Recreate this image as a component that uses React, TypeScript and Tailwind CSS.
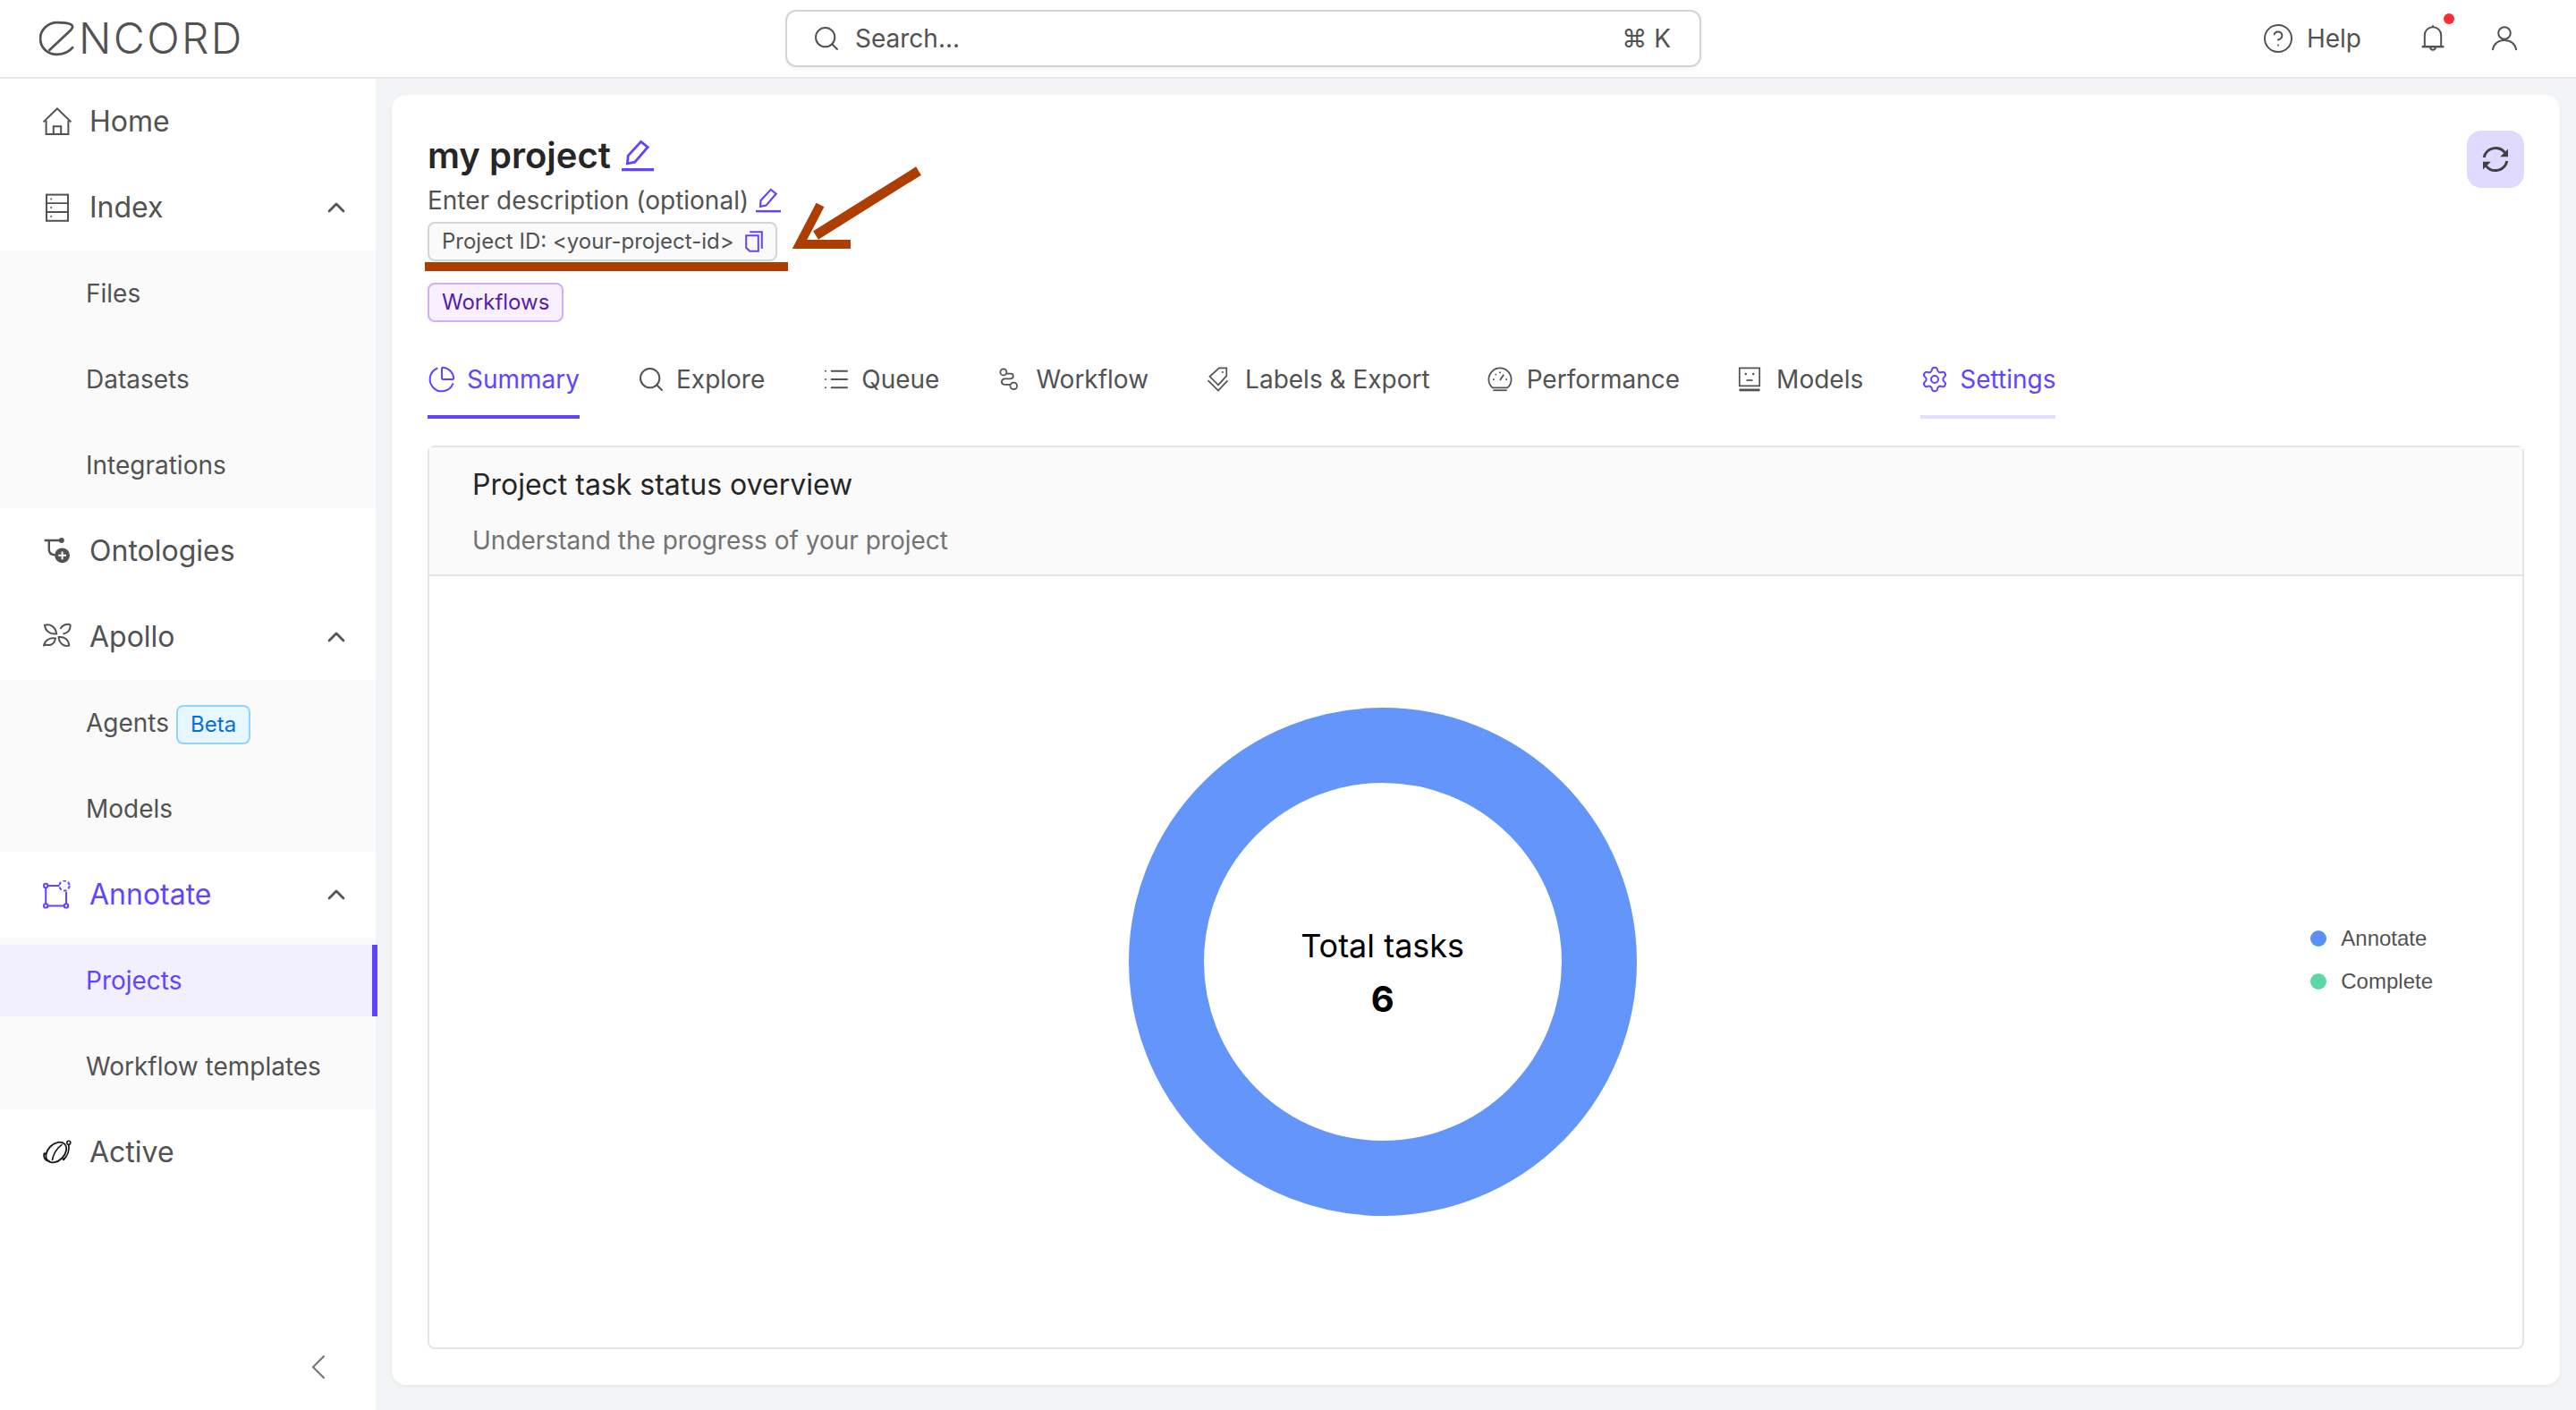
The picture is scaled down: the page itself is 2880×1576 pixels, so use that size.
import { ChevronUp, ChevronLeft, Search, List, CircleHelp, ChartPie, Settings } from "lucide-react";
import type { ReactNode } from "react";

const Ico = ({ children, className = "w-4 h-4" }: { children: ReactNode; className?: string }) => (
  <svg viewBox="0 0 16 16" fill="none" stroke="currentColor" strokeWidth="1" className={`${className} shrink-0`}>
    {children}
  </svg>
);

const tabIcon = "w-3.5 h-3.5 mr-0.5";

const HomeIcon = () => (
  <Ico>
    <path d="M0.3 8.2 8 0.7l7.7 7.5" />
    <path d="M1.8 7.4V15h12.4V7.4" />
    <path d="M5.9 15v-4.4h4.2V15" />
  </Ico>
);
const IndexIcon = () => (
  <Ico>
    <rect x="2" y="0.8" width="12" height="14.6" />
    <path d="M2 5.6h12M2 10.5h12" strokeWidth="0.9" />
    <circle cx="4.6" cy="3.3" r="0.5" fill="currentColor" stroke="none" />
    <circle cx="4.6" cy="8" r="0.5" fill="currentColor" stroke="none" />
    <circle cx="4.6" cy="13" r="0.5" fill="currentColor" stroke="none" />
  </Ico>
);
const OntologyIcon = () => (
  <Ico>
    <path d="M0.8 2h9.4M3.4 2v5.2c0 1.6 1 2.8 3.6 3" strokeWidth="1.2" />
    <circle cx="10.4" cy="2" r="1.5" fill="currentColor" stroke="none" />
    <circle cx="10.8" cy="10.4" r="4.2" fill="currentColor" stroke="none" />
    <path d="M10.8 8.2v4.4M8.6 10.4H13" stroke="white" strokeWidth="1" />
  </Ico>
);
const ApolloIcon = () => (
  <Ico>
    <path d="M1 1.4c3-1 6 .8 6.6 4.8C4.2 6.6 1.4 4.8 1 1.4z" />
    <path d="M8.8 8c3.2-.4 5.6 1.6 5.8 4.8-3 .8-5.6-1.4-5.8-4.8z" />
    <path d="M15.2 1c.6 3-1.6 5-4 5.2M15.2 1c-2-.4-4.6.2-5.4 2.4" />
    <path d="M.6 12.6c.4-2.6 3-4.4 6.4-3.8-.4 2.8-2.6 4.2-4.6 3.6-.6-.2-1.2 0-1.8.2z" />
  </Ico>
);
const AnnotateIcon = () => (
  <Ico>
    <circle cx="1.6" cy="3" r="1.1" />
    <path d="M2.8 3h6.4M1.6 4.2V13M2.8 14.2h9M13 6.4V13" />
    <circle cx="12" cy="3" r="2.8" strokeDasharray="1.8 1.2" />
    <circle cx="1.6" cy="14.2" r="1.1" />
    <circle cx="13" cy="14.2" r="1.1" />
  </Ico>
);
const ActiveIcon = () => (
  <Ico className="w-4 h-4 text-neutral-900">
    <ellipse cx="7.4" cy="8" rx="4.6" ry="6.6" transform="rotate(45 7.4 8)" strokeWidth="0.9" />
    <path d="M10.8 3.6C8 5.4 5.6 9 5.2 12.6" strokeWidth="0.8" />
    <path d="M.8 8.6c-.8 2.4.8 4.4 3 4.2M14.4 4c.4 3-.8 6.4-3.2 8.4" strokeWidth="0.9" />
    <circle cx="14.4" cy="2.6" r="1" strokeWidth="0.8" />
    <circle cx="1" cy="8.8" r="0.7" fill="currentColor" stroke="none" />
    <circle cx="11.6" cy="11.8" r="0.7" fill="currentColor" stroke="none" />
  </Ico>
);

const PencilIcon = ({ className }: { className: string }) => (
  <svg viewBox="0 0 18 18" fill="none" stroke="#5f45ff" strokeWidth="1.4" className={`${className} shrink-0`}>
    <path d="M3.2 13.4 3.6 9 10.8 1.2l3.8 3-7.2 8.4z" />
    <path d="M0 16.8h18" strokeWidth="1.6" />
  </svg>
);

const CopyIcon = () => (
  <svg viewBox="0 0 10 12" fill="none" stroke="#5f45ff" strokeWidth="1" className="w-2.5 h-3 shrink-0">
    <path d="M2.6.6h6.8v9.4" />
    <path d="M.6 2.6h6.8v8.8H2.6L.6 9.4z" />
  </svg>
);

const WorkflowTabIcon = () => (
  <Ico className={tabIcon}>
    <circle cx="4.5" cy="3.4" r="2" />
    <circle cx="11" cy="12.2" r="2.2" />
    <path d="M6.4 4.4h2.8c2 .2 2.2 3-.2 3.2H5.4c-2.6.2-2.8 3.4-.2 3.8h3.6" />
  </Ico>
);
const LabelsIcon = () => (
  <Ico className={tabIcon}>
    <path d="M8.5.8h4.8v5L8 11.6 2.6 6.2z" />
    <path d="M1.4 8.6 8 15.2l6-6.4" />
    <circle cx="10.8" cy="3.4" r="0.6" fill="currentColor" stroke="none" />
  </Ico>
);
const GaugeIcon = () => (
  <Ico className={tabIcon}>
    <path d="M3.2 13.4A7.2 7.2 0 1 1 12.8 13.4z" />
    <path d="M8 8.6 10.4 5" />
    <path d="M3.4 8h1M11.6 8h1M5 4.6l.6.6M8 3.2v1" />
    <path d="M3.6 15h8.8" />
  </Ico>
);
const ModelsIcon = () => (
  <Ico className={tabIcon}>
    <rect x="1.6" y="0.8" width="12.8" height="11.4" />
    <path d="M1.4 14.8h13.2" strokeWidth="1.6" />
    <circle cx="5.6" cy="4.6" r="0.7" fill="currentColor" stroke="none" />
    <circle cx="10.4" cy="4.6" r="0.7" fill="currentColor" stroke="none" />
    <path d="M6 8.6h4" />
  </Ico>
);

const RefreshIcon = () => (
  <svg viewBox="0 0 16 16" fill="none" stroke="currentColor" strokeWidth="1.5" className="w-4 h-4 text-neutral-700">
    <path d="M1.6 7A6.6 6.6 0 0 1 13.2 4.2" />
    <path d="M14.4 9A6.6 6.6 0 0 1 2.8 11.8" />
    <path d="M15 2.2v4.4h-4.4z" fill="currentColor" stroke="none" />
    <path d="M1 13.8V9.4h4.4z" fill="currentColor" stroke="none" />
  </svg>
);
const BellIcon = () => (
  <Ico>
    <path d="M3.4 12.4V6.2a4.6 4.6 0 0 1 9.2 0v6.2" />
    <path d="M1.8 12.6h12.4" strokeWidth="1.2" />
    <path d="M8 .6v1" />
    <path d="M6.6 13c0 1.8 2.8 1.8 2.8 0" />
  </Ico>
);
const UserIcon = () => (
  <Ico>
    <circle cx="8" cy="5" r="3.4" />
    <path d="M1.4 14.6c.4-3.4 3-5.6 6.6-5.6s6.2 2.2 6.6 5.6" />
  </Ico>
);

const Logo = () => (
  <div className="flex items-center gap-0.5 text-neutral-600">
    <svg viewBox="0 0 38 36" fill="none" stroke="currentColor" strokeWidth="2.6" className="w-5 h-5 shrink-0">
      <path d="M10 31 33 9.4c3-3 3-5 .4-6.4C29 1 24 1 19 1 9 1 1 9 1 18c0 10 8 17 18 17 7 0 12-2 17-8" />
    </svg>
    <span className="text-2xl font-light leading-none tracking-wider">NCORD</span>
  </div>
);

const NavRow = ({ icon, label, open, active }: { icon: ReactNode; label: string; open?: boolean; active?: boolean }) => (
  <div className={`h-12 flex items-center gap-2.5 pl-6 pr-3.5 text-base ${active ? "text-[#5f45ff]" : "text-neutral-600"}`}>
    {icon}
    <span className="flex-1">{label}</span>
    {open && <ChevronUp className="w-4 h-4 text-neutral-600" />}
  </div>
);

const SubRow = ({ children }: { children: ReactNode }) => (
  <div className="h-12 flex items-center gap-1 pl-12 text-sm text-neutral-600">{children}</div>
);

const Tab = ({ icon, label, state }: { icon: ReactNode; label: string; state?: "active" | "soft" }) => (
  <div
    className={`flex items-center gap-1.5 pb-2.5 border-b-2 text-sm ${
      state === "active"
        ? "text-[#5f45ff] border-[#5f45ff]"
        : state === "soft"
          ? "text-[#5f45ff] border-[#e2deff]"
          : "text-neutral-600 border-transparent"
    }`}
  >
    {icon}
    <span>{label}</span>
  </div>
);

export default function App() {
  return (
    <div className="relative [zoom:2] w-[1440px] h-[788px] overflow-hidden flex flex-col bg-gray-100 font-[Inter]">
      <header className="h-11 shrink-0 flex items-center bg-white border-b border-gray-200">
        <div className="w-[439px] pl-5.5">
          <Logo />
        </div>
        <div className="w-lg h-8 flex items-center gap-2 pl-3.5 pr-4 rounded-md border border-neutral-300 text-sm text-neutral-600 shadow-xs">
          <Search className="w-4 h-4" strokeWidth={1.5} />
          <span className="flex-1">Search...</span>
          <span>⌘ K</span>
        </div>
        <div className="flex-1 flex items-center justify-end pr-8 text-neutral-600">
          <div className="flex items-center gap-1.75 text-sm">
            <CircleHelp className="w-[18px] h-[18px]" strokeWidth={1.3} />
            <span>Help</span>
          </div>
          <div className="relative ml-8">
            <BellIcon />
            <span className="absolute -top-1.5 right-[-4px] w-1.5 h-1.5 rounded-full bg-red-500" />
          </div>
          <div className="ml-6">
            <UserIcon />
          </div>
        </div>
      </header>

      <div className="flex-1 flex min-h-0">
        <aside className="w-[210px] shrink-0 bg-white flex flex-col">
          <NavRow icon={<HomeIcon />} label="Home" />
          <NavRow icon={<IndexIcon />} label="Index" open />
          <div className="bg-neutral-50">
            <SubRow>Files</SubRow>
            <SubRow>Datasets</SubRow>
            <SubRow>Integrations</SubRow>
          </div>
          <NavRow icon={<OntologyIcon />} label="Ontologies" />
          <NavRow icon={<ApolloIcon />} label="Apollo" open />
          <div className="bg-neutral-50">
            <SubRow>
              Agents
              <span className="h-5.5 mt-0.5 px-1.75 flex items-center rounded border border-[#91d5ff] bg-[#e6f7ff] text-xs text-[#096dd9]">
                Beta
              </span>
            </SubRow>
            <SubRow>Models</SubRow>
          </div>
          <NavRow icon={<AnnotateIcon />} label="Annotate" open active />
          <div className="bg-neutral-50">
            <div className="py-1">
              <div className="w-[211px] h-10 flex items-center pl-12 text-sm text-[#5f45ff] bg-[#f2f0ff] border-r-3 border-[#5f45ff]">
                Projects
              </div>
            </div>
            <SubRow>Workflow templates</SubRow>
          </div>
          <NavRow icon={<ActiveIcon />} label="Active" />
          <div className="mt-auto flex justify-end pr-5 pb-3">
            <ChevronLeft className="w-6 h-6 text-neutral-500" strokeWidth={1} />
          </div>
        </aside>

        <main className="flex-1 min-w-0 flex px-2.25 pt-2.25 pb-3.5">
          <section className="flex-1 min-w-0 flex flex-col p-5 bg-white rounded-lg shadow-xs">
            <div className="flex justify-between items-start">
              <div className="flex flex-col items-start">
                <div className="flex items-center gap-1.5 h-7">
                  <h1 className="text-xl font-semibold text-neutral-800">my project</h1>
                  <PencilIcon className="w-4.5 h-4.5" />
                </div>
                <div className="flex items-center gap-1 h-5 mt-px text-sm text-neutral-600">
                  <span>Enter description (optional)</span>
                  <PencilIcon className="w-3.5 h-3.5" />
                </div>
                <div className="h-5.5 mt-0.5 px-1.75 flex items-center gap-1.5 rounded border border-neutral-300 bg-neutral-50 text-xs text-neutral-600">
                  <span>Project ID: &lt;your-project-id&gt;</span>
                  <CopyIcon />
                </div>
                <div className="h-5.5 mt-3 px-1.75 flex items-center rounded border border-[#d3adf7] bg-[#f9f0ff] text-xs text-[#531dab]">
                  Workflows
                </div>
              </div>
              <button className="w-8 h-8 flex items-center justify-center rounded-lg bg-[#dfdafe]">
                <RefreshIcon />
              </button>
            </div>

            <nav className="flex items-center gap-8 mt-5.5">
              <Tab icon={<ChartPie className="w-4 h-4" strokeWidth={1.5} />} label="Summary" state="active" />
              <Tab icon={<Search className="w-4 h-4" strokeWidth={1.5} />} label="Explore" />
              <Tab icon={<List className="w-4 h-4" strokeWidth={1.5} />} label="Queue" />
              <Tab icon={<WorkflowTabIcon />} label="Workflow" />
              <Tab icon={<LabelsIcon />} label="Labels & Export" />
              <Tab icon={<GaugeIcon />} label="Performance" />
              <Tab icon={<ModelsIcon />} label="Models" />
              <Tab icon={<Settings className="w-4 h-4" strokeWidth={1.5} />} label="Settings" state="soft" />
            </nav>

            <div className="flex-1 min-h-0 mt-3.75 flex flex-col rounded-sm border border-neutral-200">
              <div className="flex flex-col gap-2.25 px-6 pt-2.25 pb-2.25 bg-neutral-50 border-b border-neutral-200">
                <h2 className="text-base text-neutral-800">Project task status overview</h2>
                <p className="text-sm text-neutral-500">Understand the progress of your project</p>
              </div>
              <div className="flex-1 min-h-0 flex items-center">
                <div className="flex-1 flex justify-center pl-3.5">
                  <div className="relative w-72 h-72">
                    <svg viewBox="0 0 288 288" className="w-full h-full">
                      <circle cx="144" cy="144" r="121" fill="none" stroke="#6495fb" strokeWidth="42" />
                    </svg>
                    <div className="absolute inset-0 flex flex-col items-center justify-center gap-0.5 pt-3 text-black">
                      <span className="text-lg">Total tasks</span>
                      <span className="text-xl font-bold">6</span>
                    </div>
                  </div>
                </div>
                <div className="flex flex-col gap-2 mr-12.5 mb-0.5 font-['Liberation_Sans'] text-xs text-neutral-600">
                  <div className="flex items-center gap-2">
                    <span className="w-2.25 h-2.25 rounded-full bg-[#5b8ff9]" />
                    Annotate
                  </div>
                  <div className="flex items-center gap-2">
                    <span className="w-2.25 h-2.25 rounded-full bg-[#5ad8a6]" />
                    Complete
                  </div>
                </div>
              </div>
            </div>
          </section>
        </main>
      </div>

      <svg viewBox="0 0 1440 788" className="absolute inset-0 w-full h-full pointer-events-none" fill="none" stroke="#ad3e00">
        <path d="M237.5 149h203" strokeWidth="5" />
        <path d="M513.5 95.5 456 131.5" strokeWidth="5.5" />
        <path d="M458.5 114.5 447 136.5h28.5" strokeWidth="5" />
      </svg>
    </div>
  );
}
